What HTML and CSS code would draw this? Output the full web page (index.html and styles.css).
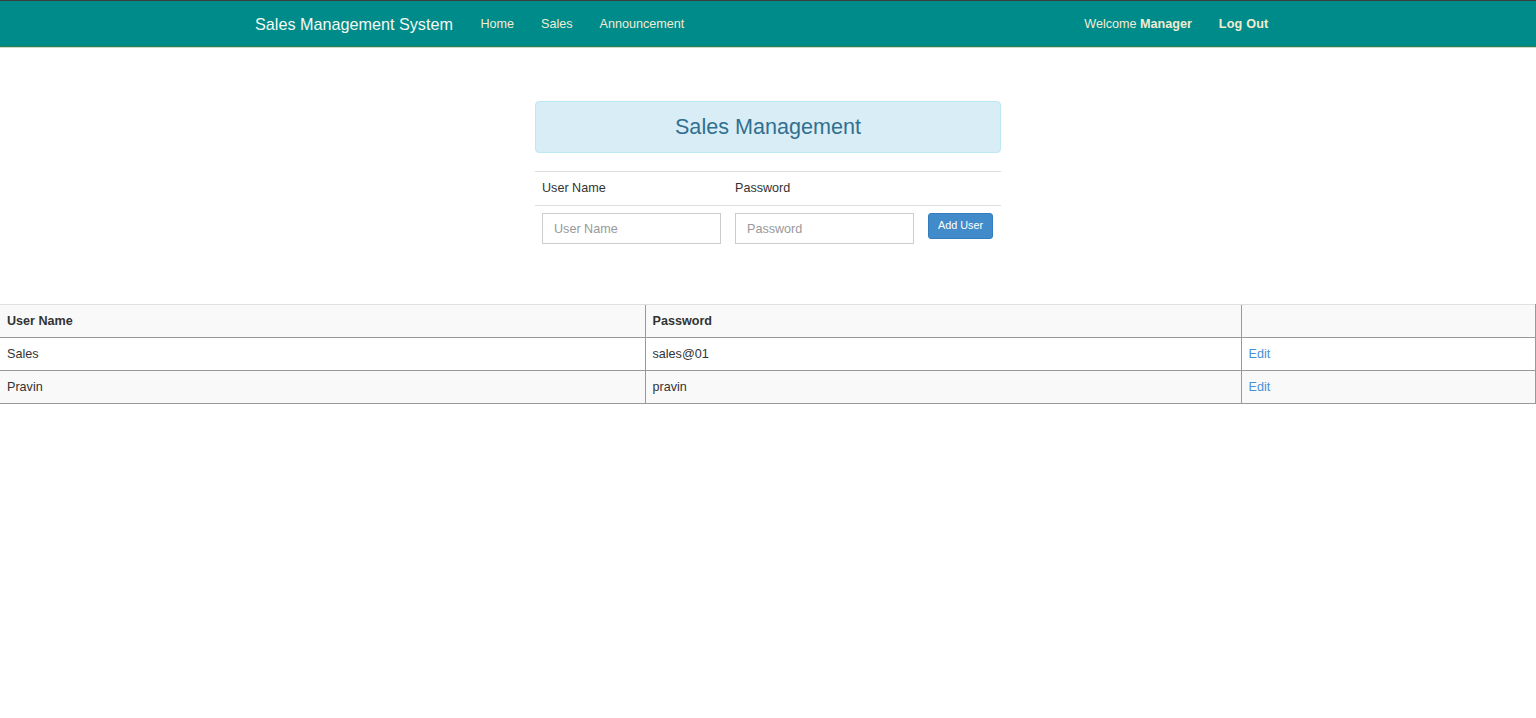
FILE: index.html
```html
<!doctype html>
<html lang="en">
<head>
    <meta charset="UTF-8">
    <meta name="viewport" content="width=device-width, initial-scale=1.0">
    <title>Sales Management System</title>
    <link rel="stylesheet" href="styles.css">
</head>
<body>
<nav class="navbar">
    <div class="navbar__inner">
        <a class="navbar__brand" href="#">Sales Management System</a>
        <ul class="navbar__nav">
            <li><a href="#">Home</a></li>
            <li><a href="#">Sales</a></li>
            <li><a href="#">Announcement</a></li>
        </ul>
        <ul class="navbar__nav navbar__nav_right">
            <li><span>Welcome <b>Manager</b></span></li>
            <li><a class="navbar__logout" href="#">Log Out</a></li>
        </ul>
    </div>
</nav>

<div class="panel">
    <div class="panel__title">
        <h3>Sales Management</h3>
    </div>
    <table class="add-form">
        <tr>
            <th>User Name</th>
            <th>Password</th>
            <th></th>
        </tr>
        <tr>
            <td><input class="add-form__input" type="text" placeholder="User Name"></td>
            <td><input class="add-form__input" type="password" placeholder="Password"></td>
            <td><button class="add-form__btn" type="button">Add User</button></td>
        </tr>
    </table>
</div>

<table class="users">
    <thead>
    <tr>
        <th class="users__col-name">User Name</th>
        <th class="users__col-pass">Password</th>
        <th></th>
    </tr>
    </thead>
    <tbody>
    <tr>
        <td>Sales</td>
        <td>sales@01</td>
        <td><a href="#">Edit</a></td>
    </tr>
    <tr class="users__row_odd">
        <td>Pravin</td>
        <td>pravin</td>
        <td><a href="#">Edit</a></td>
    </tr>
    </tbody>
</table>
</body>
</html>
```

FILE: styles.css
```css
* {
    box-sizing: border-box;
}

body {
    margin: 0;
    font-family: "Liberation Sans", Arial, Helvetica, sans-serif;
    font-size: 12.6px;
    line-height: 18px;
    color: #333333;
    background: #ffffff;
}

a {
    color: #428bca;
    text-decoration: none;
}

/* navbar */
.navbar {
    height: 47px;
    background-color: #008b8b;
    border-top: 1px solid #3c3c3c;
    border-bottom: 1px solid #2e7d57;
    box-shadow: 0 1px 0 #c8dcc8;
}

.navbar__inner {
    display: flex;
    align-items: center;
    height: 100%;
    padding: 0 254px 0 240px;
}

.navbar__brand {
    padding: 0 14px 0 15px;
    font-size: 16.2px;
    color: #f4f8f2;
}

.navbar__nav {
    display: flex;
    margin: 0;
    padding: 0;
    list-style: none;
}

.navbar__nav li a,
.navbar__nav li span {
    display: block;
    padding: 0 13.5px;
    color: #f1ecd2;
}

.navbar__nav_right {
    margin-left: auto;
}

.navbar__logout {
    font-weight: 700;
    letter-spacing: 0.2px;
}

/* add user panel */
.panel {
    width: 466px;
    margin: 54px auto 0;
}

.panel__title {
    height: 52px;
    background-color: #d9edf7;
    border: 1px solid #bce8f1;
    border-radius: 4px;
    display: flex;
    align-items: center;
    justify-content: center;
}

.panel__title h3 {
    margin: 0;
    font-size: 21.6px;
    font-weight: 400;
    color: #31708f;
}

.add-form {
    width: 100%;
    margin-top: 18px;
    border-collapse: collapse;
}

.add-form th {
    width: 193px;
    height: 34px;
    padding: 0 7px 2px;
    text-align: left;
    font-weight: 400;
    border-top: 1px solid #dddddd;
    border-bottom: 1px solid #dddddd;
}

.add-form th:last-child {
    width: auto;
}

.add-form td {
    padding: 7px 7px;
    vertical-align: top;
}

.add-form__input {
    display: block;
    width: 179px;
    height: 31px;
    padding: 4px 11px;
    font-family: inherit;
    font-size: 12.6px;
    color: #555555;
    border: 1px solid #cccccc;
    border-radius: 0;
    background: #ffffff;
}

.add-form__input::placeholder {
    color: #999999;
}

.add-form__btn {
    display: block;
    width: 65px;
    height: 26px;
    padding: 0 0 2px;
    font-family: inherit;
    font-size: 10.8px;
    color: #ffffff;
    background-color: #428bca;
    border: 1px solid #357ebd;
    border-radius: 3px;
}

/* users table */
.users {
    width: 100%;
    margin-top: 53px;
    border-collapse: collapse;
    border-top: 1px solid #dddddd;
}

.users th,
.users td {
    height: 33px;
    padding: 0 7px;
    text-align: left;
    border-bottom: 1px solid #999999;
    border-left: 1px solid #999999;
}

.users th:first-child,
.users td:first-child {
    border-left: none;
}

.users th:last-child,
.users td:last-child {
    border-right: 1px solid #999999;
}

.users thead tr {
    background-color: #f9f9f9;
}

.users th {
    font-weight: 700;
    border-top: 1px solid #e0e0e0;
}

.users__col-name {
    width: 645px;
}

.users__col-pass {
    width: 596px;
}

.users__row_odd {
    background-color: #f9f9f9;
}

.users td a {
    color: #4a90d6;
}
```
